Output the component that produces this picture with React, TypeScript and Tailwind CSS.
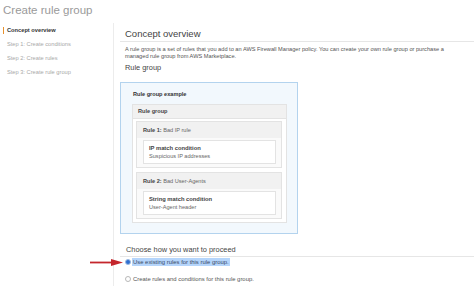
export default function App() {
  const Radio = ({ checked }: { checked?: boolean }) =>
    checked ? (
      <span className="w-[6px] h-[6px] rounded-full border border-[#9dbbe3] bg-[#2f6fd0] shrink-0 box-border" />
    ) : (
      <span className="w-[6px] h-[6px] rounded-full border border-[#b8b8b8] bg-white shrink-0 box-border" />
    );

  const RuleBox = ({
    num,
    name,
    cond,
    detail,
    className,
  }: {
    num: string;
    name: string;
    cond: string;
    detail: string;
    className?: string;
  }) => (
    <div className={`w-[146px] border border-[#e3e3e3] bg-[#fafafa] ${className ?? ""}`}>
      <div className="h-[16px] flex items-center pl-[6px] bg-[#f1f1f1] text-[5.6px] text-[#666] whitespace-nowrap">
        <span className="font-bold text-[#444]">{num}</span>&nbsp;{name}
      </div>
      <div className="pt-[2px] pb-[3px] pl-[6px]">
        <div className="w-[133px] h-[24px] border border-[#e3e3e3] bg-white pt-[3px] pl-[5px] box-border">
          <div className="leading-[8px] text-[5.8px] font-bold text-[#444] whitespace-nowrap">{cond}</div>
          <div className="leading-[8px] text-[5.6px] text-[#666] whitespace-nowrap">{detail}</div>
        </div>
      </div>
    </div>
  );

  return (
    <div className="relative w-[474px] h-[286px] bg-white overflow-hidden font-['Liberation_Sans',Arial,sans-serif] text-[#444]">
      <div className="h-[23px] pl-[3px] pt-[3px] text-[11.5px] leading-[14px] text-[#9a9a9a] whitespace-nowrap">
        Create rule group
      </div>
      <div className="flex h-[263px]">
        <aside className="w-[114px] shrink-0 border-r border-[#ececec] text-[5.7px] whitespace-nowrap">
          <div className="h-[14px] flex items-center">
            <span className="ml-[3px] mr-[3px] w-[1px] h-[7px] bg-[#e8912d]" />
            <span className="font-bold text-[#333]">Concept overview</span>
          </div>
          <div className="h-[14px] flex items-center pl-[7px] text-[#a8a8a8]">Step 1: Create conditions</div>
          <div className="h-[14px] flex items-center pl-[7px] text-[#a8a8a8]">Step 2: Create rules</div>
          <div className="h-[14px] flex items-center pl-[7px] text-[#a8a8a8]">Step 3: Create rule group</div>
        </aside>
        <main className="flex-1 pl-[6px] flex flex-col">
          <div className="pt-[5px] pb-[2px] pl-[5px] leading-[11px] text-[9.5px] text-[#444] border-b border-[#e6e6e6] whitespace-nowrap">
            Concept overview
          </div>
          <div className="mt-[4px] pl-[5px] text-[5.65px] leading-[6.5px] text-[#555] whitespace-nowrap">
            <div>
              A rule group is a set of rules that you add to an AWS Firewall Manager policy. You can create your own rule group or purchase a
            </div>
            <div>managed rule group from AWS Marketplace.</div>
          </div>
          <div className="mt-[4px] pl-[5px] text-[7.4px] leading-[9px] text-[#444] whitespace-nowrap">Rule group</div>
          <div className="mt-[10px] w-[178px] h-[152px] border border-[#b3d3ee] bg-[#f2f8fd] box-border pt-[7px] pl-[11px]">
            <div className="pl-[1px] text-[5.6px] leading-[8px] font-bold text-[#333] whitespace-nowrap">Rule group example</div>
            <div className="mt-[6px] w-[155px] border border-[#e3e3e3] bg-white">
              <div className="h-[14px] flex items-center pl-[5px] bg-[#f1f1f1] border-b border-[#e3e3e3] text-[5.6px] font-bold text-[#444]">
                Rule group
              </div>
              <div className="pt-[2px] pb-[3px] pl-[3px]">
                <RuleBox num="Rule 1:" name="Bad IP rule" cond="IP match condition" detail="Suspicious IP addresses" />
                <RuleBox
                  className="mt-[4px]"
                  num="Rule 2:"
                  name="Bad User-Agents"
                  cond="String match condition"
                  detail="User-Agent header"
                />
              </div>
            </div>
          </div>
          <div className="mt-[11px] pl-[6px] pb-[2px] text-[7.4px] leading-[9px] text-[#444] border-b border-[#e6e6e6] whitespace-nowrap">
            Choose how you want to proceed
          </div>
          <div className="h-[10px] flex items-center pl-[5px] text-[5.9px] whitespace-nowrap">
            <Radio checked />
            <span className="ml-[1px] px-[1px] bg-[#b5d5fb] text-[#3a4a66] leading-[8px]">Use existing rules for this rule group.</span>
          </div>
          <div className="mt-[7px] h-[10px] flex items-center pl-[5px] text-[5.9px] whitespace-nowrap">
            <Radio />
            <span className="ml-[2px] text-[#555] leading-[8px]">Create rules and conditions for this rule group.</span>
          </div>
        </main>
      </div>
      <svg className="absolute left-[90px] top-[259px]" width="33" height="7" viewBox="0 0 33 7">
        <line x1="0" y1="3.5" x2="24" y2="3.5" stroke="#c4262c" strokeWidth="1.8" />
        <polygon points="21,0 33,3.5 21,7" fill="#c4262c" />
      </svg>
    </div>
  );
}
